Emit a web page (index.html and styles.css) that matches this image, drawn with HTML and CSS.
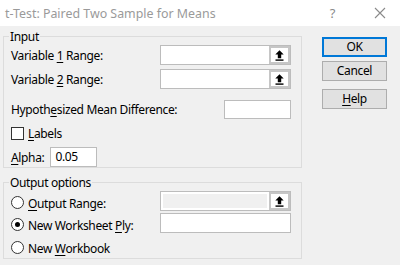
FILE: index.html
```html
<!DOCTYPE html>
<html>
<head>
<meta charset="utf-8">
<link rel="stylesheet" href="styles.css">
</head>
<body>
<div class="titlebar">
  <span class="title">t-Test: Paired Two Sample for Means</span>
  <span class="qmark">?</span>
  <svg class="close" width="12" height="12" viewBox="0 0 12 12"><path d="M1 1L11 11M11 1L1 11" stroke="#8a8a8a" stroke-width="1.1" fill="none"/></svg>
</div>
<div class="dialog">
  <div class="left">
    <fieldset class="group g-input">
      <legend>Input</legend>
      <div class="row r-var1">
        <span class="lbl">Variable <u>1</u> Range:</span>
        <span class="ref"><span class="field"></span><span class="pick"><svg width="9" height="11" viewBox="0 0 9 11"><path d="M4.5 0.3L0.3 4.6H2.8V8.2H6.2V4.6H8.7Z" fill="#000"/><rect x="0.5" y="9.4" width="8" height="1.4" fill="#000"/></svg></span></span>
      </div>
      <div class="row r-var2">
        <span class="lbl">Variable <u>2</u> Range:</span>
        <span class="ref"><span class="field"></span><span class="pick"><svg width="9" height="11" viewBox="0 0 9 11"><path d="M4.5 0.3L0.3 4.6H2.8V8.2H6.2V4.6H8.7Z" fill="#000"/><rect x="0.5" y="9.4" width="8" height="1.4" fill="#000"/></svg></span></span>
      </div>
      <div class="row r-hyp">
        <span class="lbl">Hypoth<u>e</u>sized Mean Difference:</span>
        <span class="box hyp"></span>
      </div>
      <div class="row r-labels">
        <span class="check"></span>
        <span class="lbl"><u>L</u>abels</span>
      </div>
      <div class="row r-alpha">
        <span class="lbl"><u>A</u>lpha:</span>
        <span class="box alpha">0.05</span>
      </div>
    </fieldset>
    <fieldset class="group g-output">
      <legend>Output options</legend>
      <div class="row r-out1">
        <span class="radio"></span>
        <span class="lbl rl"><u>O</u>utput Range:</span>
        <span class="ref disabled"><span class="field"><span class="inner"></span></span><span class="pick"><svg width="9" height="11" viewBox="0 0 9 11"><path d="M4.5 0.3L0.3 4.6H2.8V8.2H6.2V4.6H8.7Z" fill="#000"/><rect x="0.5" y="9.4" width="8" height="1.4" fill="#000"/></svg></span></span>
      </div>
      <div class="row r-out2">
        <span class="radio on"></span>
        <span class="lbl rl">New Worksheet <u>P</u>ly:</span>
        <span class="box ply"></span>
      </div>
      <div class="row r-out3">
        <span class="radio"></span>
        <span class="lbl rl">New <u>W</u>orkbook</span>
      </div>
    </fieldset>
  </div>
  <div class="buttons">
    <div class="btn ok">OK</div>
    <div class="btn cancel">Cancel</div>
    <div class="btn help"><u>H</u>elp</div>
  </div>
</div>
</body>
</html>
```
FILE: styles.css
```css
* { box-sizing: border-box; }
html, body { margin: 0; padding: 0; }
body {
  width: 400px;
  height: 265px;
  background: #f0f0f0;
  font-family: "Noto Sans", "Segoe UI", sans-serif;
  font-size: 12px;
  letter-spacing: -0.35px;
  color: #000;
  overflow: hidden;
}
u { text-decoration: underline; text-underline-offset: 2px; }

.titlebar {
  height: 26px;
  background: #fff;
  display: flex;
  align-items: center;
  padding-left: 5px;
}
.title { color: #9a9a9a; font-size: 12.4px; letter-spacing: 0; flex: 1; }
.qmark { color: #8a8a8a; font-size: 13px; margin-right: 39px; }
.close { margin-right: 14px; }

.dialog { display: flex; align-items: flex-start; }
.left { width: 299px; margin-left: 3px; margin-top: 3px; }

.group {
  margin: 0;
  border: 1px solid #dcdcdc;
  padding: 0 10px 0 7px;
  min-width: 0;
}
.group legend {
  padding: 0 1px;
  margin-left: -2px;
  line-height: 15px;
  font-size: 12px;
}
.g-input { padding-top: 1px; padding-bottom: 0; height: 139px; }
.g-output { margin-top: 7px; padding-top: 1px; height: 84px; }

.row { display: flex; align-items: center; height: 20px; }
.r-var1 { justify-content: space-between; }
.r-var2 { justify-content: space-between; margin-top: 4px; }
.r-hyp { justify-content: space-between; margin-top: 10px; }
.r-labels { margin-top: 6px; height: 16px; }
.r-alpha { margin-top: 6px; }
.r-out2 { margin-top: 2px; }
.r-out3 { margin-top: 3px; }
.lbl { padding-top: 1px; }

.ref {
  width: 131px; height: 20px;
  display: flex;
  border: 1px solid #bcbcbc;
  background: #fff;
}
.ref .field { flex: 1; }
.ref .pick {
  width: 21px; height: 18px;
  background: #fff;
  box-shadow: inset 0 0 0 2px #c6c6c6;
  display: flex; align-items: center; justify-content: center;
  margin: 0;
}
.ref.disabled { margin-left: auto; }
.ref.disabled .field { padding: 2px; }
.ref.disabled .inner { display: block; height: 100%; background: #f0f0f0; }

.box {
  height: 20px;
  border: 1px solid #bcbcbc;
  background: #fff;
}
.hyp { width: 67px; height: 19px; }
.alpha { width: 47px; margin-left: 6px; padding: 1px 0 0 4px; line-height: 16px; }
.ply { width: 131px; margin-left: auto; }

.check {
  width: 13px; height: 13px;
  border: 1px solid #333;
  background: #fff;
  margin-right: 4px;
}
.radio {
  width: 13px; height: 13px;
  border: 1px solid #333;
  border-radius: 50%;
  background: #fff;
  position: relative;
  margin-top: 3px;
  margin-right: 4px;
}
.radio.on::after {
  content: "";
  position: absolute;
  left: 3px; top: 3px;
  width: 5px; height: 5px;
  border-radius: 50%;
  background: #000;
}
.rl { padding-top: 4px; }

.buttons {
  margin-left: 20px;
  margin-top: 11px;
  display: flex;
  flex-direction: column;
  width: 65px;
}
.btn {
  height: 20px;
  border: 1px solid #adadad;
  background: #e1e1e1;
  display: flex; align-items: center; justify-content: center;
  line-height: 1;
}
.ok { border: 2px solid #0078d7; }
.cancel { margin-top: 4px; }
.help { margin-top: 8px; }
```
